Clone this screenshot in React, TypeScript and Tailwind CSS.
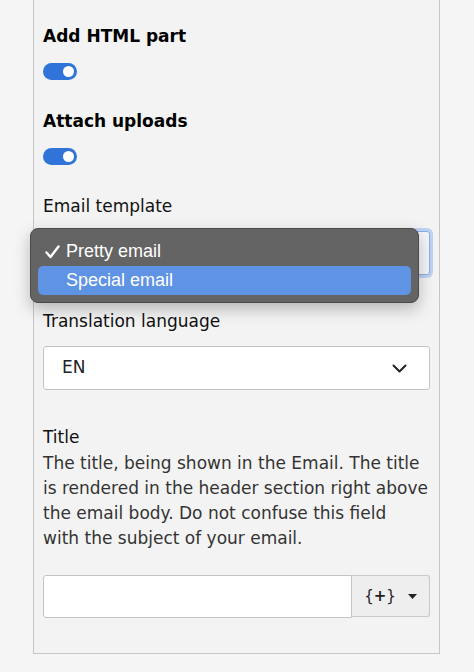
import React from "react";

const font = { fontFamily: '"DejaVu Sans", Verdana, sans-serif' };

function Toggle() {
  return (
    <div className="relative h-[17px] w-[34px] rounded-full bg-[#3074d9]">
      <div className="absolute right-[3px] top-[3px] h-[11px] w-[11px] rounded-full bg-white" />
    </div>
  );
}

export default function App() {
  return (
    <div
      className="min-h-[672px] w-[474px] bg-[#f5f5f5] text-[17px] text-[#111]"
      style={font}
    >
      <div className="ml-[33px] w-[407px] border-x border-b border-[#c6c6c6] bg-[#f3f3f3] px-[9px] pb-[35px] pt-[24px]">
        <div className="font-bold leading-[24px] text-black">Add HTML part</div>
        <div className="mt-[15px]">
          <Toggle />
        </div>
        <div className="mt-[29px] font-bold leading-[24px] text-black">Attach uploads</div>
        <div className="mt-[15px]">
          <Toggle />
        </div>

        <div className="mt-[29px] leading-[24px]">Email template</div>
        <div className="relative mt-[13px] h-[44px]">
          <div className="h-[44px] rounded-[3px] border border-[#8eaee6] bg-[#f4f6fa] shadow-[0_0_0_3px_#bed2f1]" />
          <div
            className="absolute left-[-13px] top-[-3px] h-[75px] w-[389px] rounded-[8px] border border-[#4a4a4a] bg-[#646464] px-[7px] py-[7px] text-[18px] text-white shadow-[0_6px_16px_rgba(0,0,0,0.25)]"
            style={{ fontFamily: '"Liberation Sans", Arial, sans-serif' }}
          >
            <div className="flex h-[30px] items-center">
              <span className="flex w-[28px] justify-center pt-[2px]">
                <svg width="15" height="14" viewBox="0 0 15 14" fill="none">
                  <path d="M1.5 7.5 L5.5 12 L13.5 1.5" stroke="white" strokeWidth="2.4" strokeLinecap="round" strokeLinejoin="round" />
                </svg>
              </span>
              <span>Pretty email</span>
            </div>
            <div className="flex h-[29px] items-center rounded-[5px] bg-[#5f93e3] pl-[28px]">
              Special email
            </div>
          </div>
        </div>

        <div className="mt-[34px] leading-[24px]">Translation language</div>
        <div className="mt-[13px] flex h-[44px] items-center justify-between rounded-[3px] border border-[#c4c4c4] bg-white pl-[18px] pr-[22px] text-[#222]">
          <span>EN</span>
          <svg width="15" height="9" viewBox="0 0 15 9" fill="none">
            <path d="M1.5 1.5 L7.5 7.5 L13.5 1.5" stroke="#222" strokeWidth="2" strokeLinecap="round" strokeLinejoin="round" />
          </svg>
        </div>

        <div className="mt-[35px] leading-[24px]">Title</div>
        <div className="mt-[2px] leading-[25px] text-[#333]">
          The title, being shown in the Email. The title
          <br />
          is rendered in the header section right above
          <br />
          the email body. Do not confuse this field
          <br />
          with the subject of your email.
        </div>

        <div className="mt-[24px] flex items-start">
          <div className="h-[43px] flex-1 rounded-l-[3px] border border-[#c4c4c4] bg-white" />
          <div className="flex h-[42px] w-[78px] items-center justify-center gap-[12px] rounded-r-[3px] border border-l-0 border-[#c9c9c9] bg-[#eeeeee] text-[#222]">
            <span className="text-[15px] leading-none">
              {"{"}
              <span className="font-bold">+</span>
              {"}"}
            </span>
            <svg width="9" height="5" viewBox="0 0 9 5">
              <path d="M0 0 L9 0 L4.5 5 Z" fill="#222" />
            </svg>
          </div>
        </div>
      </div>
    </div>
  );
}
